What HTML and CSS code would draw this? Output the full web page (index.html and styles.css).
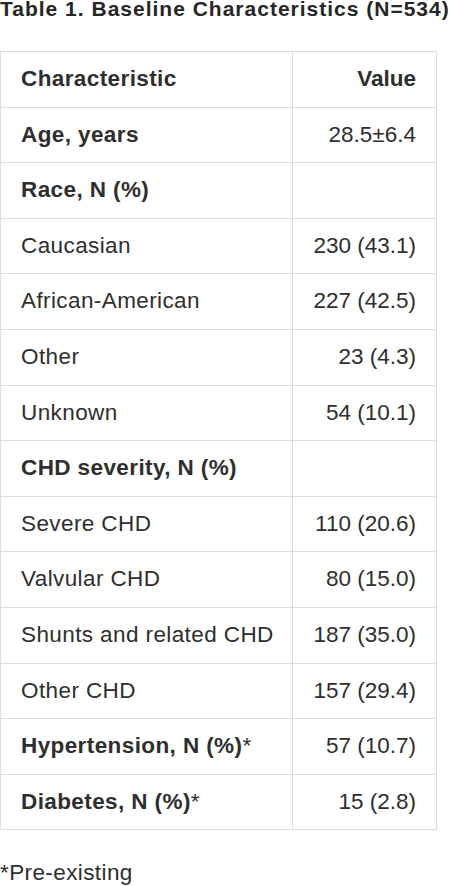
FILE: index.html
```html
<!DOCTYPE html>
<html>
<head>
<meta charset="utf-8">
<link rel="stylesheet" href="styles.css">
</head>
<body>
<div class="title">Table 1. Baseline Characteristics (N=534)</div>
<table class="data">
  <colgroup><col class="col-label"><col class="col-value"></colgroup>
  <tr><th class="label">Characteristic</th><th class="value">Value</th></tr>
  <tr><td class="label bold">Age, years</td><td class="value">28.5±6.4</td></tr>
  <tr><td class="label bold">Race, N (%)</td><td class="value"></td></tr>
  <tr><td class="label">Caucasian</td><td class="value">230 (43.1)</td></tr>
  <tr><td class="label">African-American</td><td class="value">227 (42.5)</td></tr>
  <tr><td class="label">Other</td><td class="value">23 (4.3)</td></tr>
  <tr><td class="label">Unknown</td><td class="value">54 (10.1)</td></tr>
  <tr><td class="label bold">CHD severity, N (%)</td><td class="value"></td></tr>
  <tr><td class="label">Severe CHD</td><td class="value">110 (20.6)</td></tr>
  <tr><td class="label">Valvular CHD</td><td class="value">80 (15.0)</td></tr>
  <tr><td class="label">Shunts and related CHD</td><td class="value">187 (35.0)</td></tr>
  <tr><td class="label">Other CHD</td><td class="value">157 (29.4)</td></tr>
  <tr><td class="label bold">Hypertension, N (%)<span class="star">*</span></td><td class="value">57 (10.7)</td></tr>
  <tr><td class="label bold">Diabetes, N (%)<span class="star">*</span></td><td class="value">15 (2.8)</td></tr>
</table>
<p class="note">*Pre-existing</p>
</body>
</html>
```
FILE: styles.css
```css
html, body {
  margin: 0;
  padding: 0;
  background: #ffffff;
}
body {
  font-family: "Liberation Sans", Arial, sans-serif;
  color: #2e2e2e;
  overflow: hidden;
  width: 450px;
}
.title {
  font-size: 21px;
  font-weight: bold;
  line-height: 20px;
  letter-spacing: 1px;
  margin-top: -1px;
  white-space: nowrap;
  color: #262626;
  height: 52px;
}
.data {
  border-collapse: collapse;
  table-layout: fixed;
  width: 436px;
  font-size: 22.5px;
}
.col-label {
  width: 292px;
}
.col-value {
  width: 144px;
}
.data th, .data td {
  border: 1px solid #dddddd;
  padding: 11px 20px;
  line-height: 32.6px;
  white-space: nowrap;
}
.data th {
  font-weight: bold;
}
.label {
  text-align: left;
  letter-spacing: 0.4px;
}
.value {
  text-align: right;
  letter-spacing: 0;
}
.bold {
  font-weight: bold;
}
.star {
  font-weight: normal;
}
.note {
  font-size: 22.5px;
  letter-spacing: 0.4px;
  line-height: 33px;
  margin: 26px 0 0 0;
}
```
